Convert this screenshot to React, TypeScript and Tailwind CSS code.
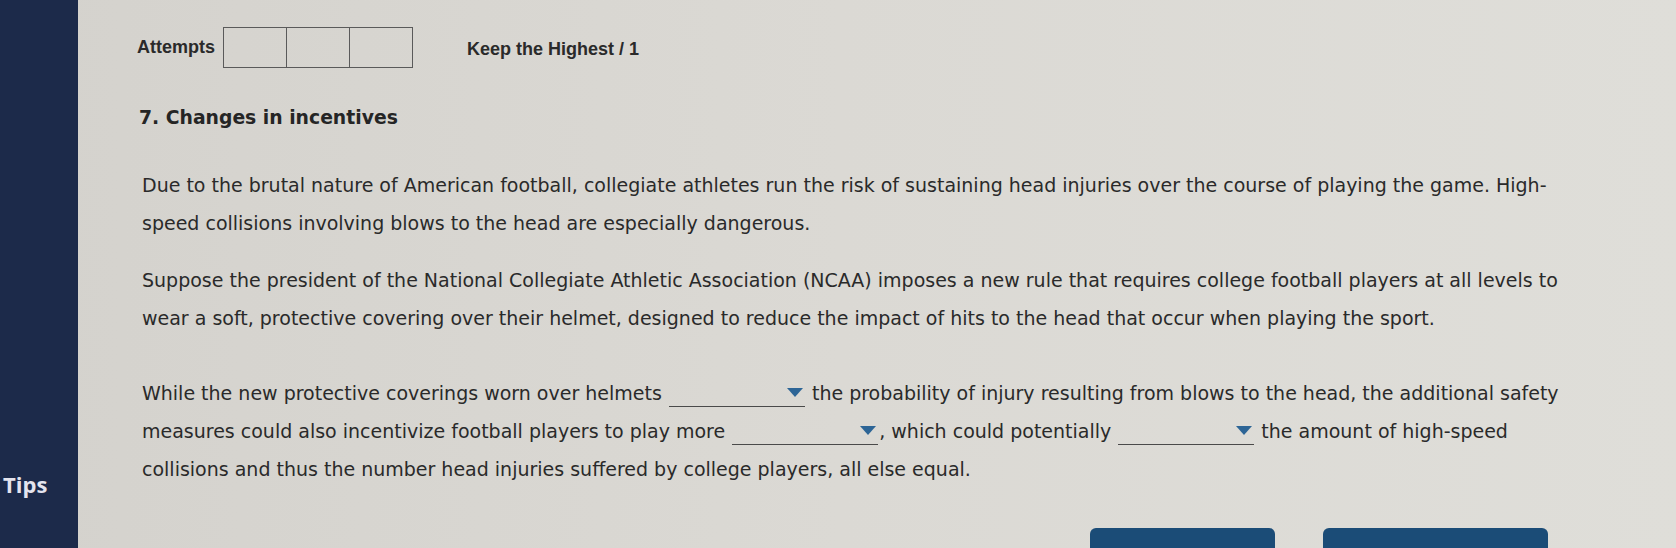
import React from "react";

function Dropdown({ w }: { w: string }) {
  return (
    <span className={`relative inline-block ${w} h-[22px] align-[-7px] border-b-[1.5px] border-[#4a4a4a] mx-[1px]`}>
      <svg
        className="absolute right-[2px] top-[3px]"
        width="16"
        height="9"
        viewBox="0 0 16 9"
      >
        <polygon points="0,0 16,0 8,9" fill="#2d6596" />
      </svg>
    </span>
  );
}

export default function App() {
  return (
    <div className="flex w-[1676px] h-[548px] overflow-hidden bg-linear-to-r from-[#d4d2cd] via-[#dbd9d4] to-[#dfded9]">
      <div className="w-[78px] shrink-0 bg-[#1c2a4a] flex flex-col">
        <div className="mt-[469px] pl-[3px] text-[22px] font-bold text-[#e4e4ee] font-['Open_Sans',sans-serif] leading-[30px]">
          Tips
        </div>
      </div>
      <div className="flex-1 pl-[59px] pt-[27px] text-[#2a2a2a]">
        <div className="flex items-center h-[41px] font-['Liberation_Sans',Arial,sans-serif] font-bold text-[18px] text-[#2a2a2a]">
          <span className="mr-[8px]">Attempts</span>
          <div className="flex h-[41px] border border-[#5a5a5a]">
            <div className="w-[63px] border-r border-[#5a5a5a]" />
            <div className="w-[63px] border-r border-[#5a5a5a]" />
            <div className="w-[62px]" />
          </div>
          <span className="ml-[54px] mt-[4px]">Keep the Highest / 1</span>
        </div>

        <div className="mt-[35px] pl-[2px] h-[30px] leading-[30px] font-['DejaVu_Sans',Verdana,sans-serif] font-bold text-[18.8px] text-[#252525]">
          7. Changes in incentives
        </div>

        <div className="font-['DejaVu_Sans',Verdana,sans-serif] text-[19px] leading-[38px] pl-[5px]">
          <p className="mt-[33px] whitespace-nowrap">
            Due to the brutal nature of American football, collegiate athletes run the risk of sustaining head injuries over the course of playing the game. High-
            <br />
            speed collisions involving blows to the head are especially dangerous.
          </p>
          <p className="mt-[19px] whitespace-nowrap">
            Suppose the president of the National Collegiate Athletic Association (NCAA) imposes a new rule that requires college football players at all levels to
            <br />
            wear a soft, protective covering over their helmet, designed to reduce the impact of hits to the head that occur when playing the sport.
          </p>
          <p className="mt-[37px] whitespace-nowrap">
            While the new protective coverings worn over helmets <Dropdown w="w-[136px]" /> the probability of injury resulting from blows to the head, the additional safety
            <br />
            measures could also incentivize football players to play more <Dropdown w="w-[146px]" />, which could potentially <Dropdown w="w-[136px]" /> the amount of high-speed
            <br />
            collisions and thus the number head injuries suffered by college players, all else equal.
          </p>
        </div>

        <div className="mt-[40px] flex pl-[953px] gap-[48px]">
          <div className="w-[185px] h-[50px] rounded-[6px] bg-[#1b4c77]" />
          <div className="w-[225px] h-[50px] rounded-[6px] bg-[#1b4c77]" />
        </div>
      </div>
    </div>
  );
}
